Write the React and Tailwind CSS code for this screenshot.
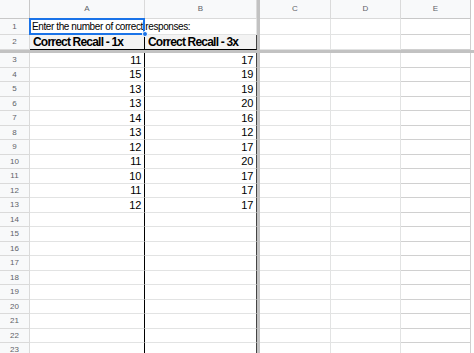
import React from "react";

const COL_A = [11, 15, 13, 13, 14, 13, 12, 11, 10, 11, 12];
const COL_B = [17, 19, 19, 20, 16, 12, 17, 20, 17, 17, 17];

const font = { fontFamily: '"Liberation Sans", Arial, sans-serif' };

function FreezeBar() {
  return <div className="w-[3px] shrink-0 bg-[#c2c2c2]" />;
}

function RestCells() {
  return (
    <>
      <div className="w-[71px] shrink-0 border-r border-b border-[#e2e3e3]" />
      <div className="w-[70px] shrink-0 border-r border-b border-[#e2e3e3]" />
      <div className="w-[70px] shrink-0 border-r border-b border-[#d0d0d0]" />
      <div className="flex-1" />
    </>
  );
}

export default function App() {
  const dataRows = [];
  for (let i = 0; i < 21; i++) {
    const rowNum = i + 3;
    const h = i % 2 === 0 ? "h-[15px]" : "h-[14px]";
    const a = COL_A[i];
    const b = COL_B[i];
    dataRows.push(
      <div key={rowNum} className={`flex ${h}`}>
        <div className="w-[30px] shrink-0 flex items-center justify-center border-r border-b border-[#dadada] bg-[#f8f9fa] text-[8px] text-[#5f6368]">
          {rowNum}
        </div>
        <div className="w-[115px] shrink-0 flex items-center justify-end pr-[3px] border-r border-r-black border-b border-b-[#e2e3e3] text-[11px] tracking-[-0.3px] text-black">
          {a ?? ""}
        </div>
        <div className="w-[112px] shrink-0 flex items-center justify-end pr-[3px] border-r border-r-[#444] border-b border-b-[#e2e3e3] text-[11px] tracking-[-0.3px] text-black">
          {b ?? ""}
        </div>
        <FreezeBar />
        <RestCells />
      </div>
    );
  }

  return (
    <div className="w-[474px] h-[353px] overflow-hidden bg-white" style={font}>
      {/* column headers */}
      <div className="flex h-[19px]">
        <div className="w-[30px] shrink-0 border-r border-b border-[#c8c8c8] bg-[#f8f9fa]" />
        <div className="w-[115px] shrink-0 flex items-center justify-center border-r border-b border-[#dadada] bg-[#f8f9fa] text-[8px] text-[#5f6368]">A</div>
        <div className="w-[112px] shrink-0 flex items-center justify-center border-r border-b border-[#dadada] bg-[#f8f9fa] text-[8px] text-[#5f6368]">B</div>
        <FreezeBar />
        <div className="w-[71px] shrink-0 flex items-center justify-center border-r border-b border-[#dadada] bg-[#f8f9fa] text-[8px] text-[#5f6368]">C</div>
        <div className="w-[70px] shrink-0 flex items-center justify-center border-r border-b border-[#dadada] bg-[#f8f9fa] text-[8px] text-[#5f6368]">D</div>
        <div className="w-[70px] shrink-0 flex items-center justify-center border-r border-b border-[#c8c8c8] bg-[#f8f9fa] text-[8px] text-[#5f6368]">E</div>
        <div className="flex-1 bg-white" />
      </div>

      {/* row 1 */}
      <div className="flex h-[16px]">
        <div className="w-[30px] shrink-0 flex items-center justify-center border-r border-b border-[#dadada] bg-[#f8f9fa] text-[8px] text-[#5f6368]">1</div>
        <div className="relative w-[115px] shrink-0 border-b border-[#e2e3e3]">
          <div className="absolute left-0 top-0 z-10 whitespace-nowrap pl-[2px] pt-[1px] text-[10px] leading-[14px] tracking-[-0.4px] text-black">
            Enter the number of correct responses:
          </div>
          <div className="absolute -left-px -top-px z-20 h-[17px] w-[116px] border-2 border-[#1a73e8]" />
          <div className="absolute -right-[3px] -bottom-[3px] z-30 h-[6px] w-[6px] rounded-full border border-white bg-[#1a73e8]" />
        </div>
        <div className="w-[112px] shrink-0 border-r border-b border-[#e2e3e3]" />
        <FreezeBar />
        <RestCells />
      </div>

      {/* row 2 */}
      <div className="flex h-[15px]">
        <div className="w-[30px] shrink-0 flex items-center justify-center border-r border-b border-[#dadada] bg-[#f8f9fa] text-[8px] text-[#5f6368]">2</div>
        <div className="w-[115px] shrink-0 flex items-center pl-[3px] border-r border-b border-black bg-[#f3f3f3] text-[12px] font-bold tracking-[-0.8px] text-black">
          Correct Recall - 1x
        </div>
        <div className="w-[112px] shrink-0 flex items-center pl-[3px] border-r border-b border-r-[#444] border-b-black bg-[#f3f3f3] text-[12px] font-bold tracking-[-0.8px] text-black">
          Correct Recall - 3x
        </div>
        <FreezeBar />
        <RestCells />
      </div>

      {/* frozen rows divider */}
      <div className="h-[3px] bg-[#c2c2c2]" />

      {dataRows}
    </div>
  );
}
